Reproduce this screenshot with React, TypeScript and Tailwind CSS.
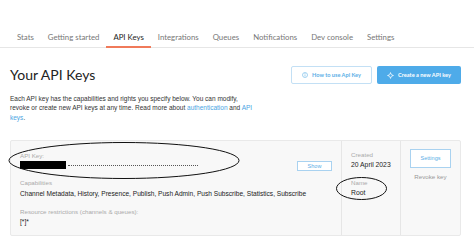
import React from "react";

const tabs = ["Stats", "Getting started", "API Keys", "Integrations", "Queues", "Notifications", "Dev console", "Settings"];

export default function App() {
  return (
    <div className="w-[474px] h-[240px] bg-white overflow-hidden relative" style={{ fontFamily: "Lato, 'Liberation Sans', sans-serif" }}>
      {/* Tabs */}
      <div className="pt-[31px] border-b border-[#e6e6e6]">
        <div className="flex px-[10px]">
          {tabs.map((t) => (
            <div
              key={t}
              className={
                t === "API Keys"
                  ? "px-[7px] pb-[3px] text-[7.8px] leading-[12px] text-[#222] border-b-2 border-[#f07a5a] -mb-px"
                  : "px-[7px] pb-[3px] text-[7.8px] leading-[12px] text-[#777] border-b-2 border-transparent -mb-px"
              }
            >
              {t}
            </div>
          ))}
        </div>
      </div>

      {/* Header */}
      <div className="flex items-center justify-between pl-[10px] pr-[13px] mt-[18px]">
        <div className="text-[14px] leading-[18px] text-[#222]">Your API Keys</div>
        <div className="flex gap-[5px]">
          <div className="flex items-center gap-[4px] h-[18px] w-[81px] justify-center border border-[#c3e0f5] rounded-[2px] text-[5.6px] text-[#5aaee6] font-bold">
            <svg width="6" height="6" viewBox="0 0 12 12" fill="none" stroke="#7cbfea" strokeWidth="1.4">
              <circle cx="6" cy="6" r="5" />
              <line x1="6" y1="5" x2="6" y2="9" />
              <circle cx="6" cy="3.3" r="0.4" fill="#7cbfea" />
            </svg>
            How to use Api Key
          </div>
          <div className="flex items-center gap-[4px] h-[18px] w-[84px] justify-center bg-[#4eabe9] rounded-[2px] text-[5.6px] text-white font-bold">
            <svg width="7" height="7" viewBox="0 0 12 12" fill="none" stroke="#ffffff" strokeWidth="1.3">
              <circle cx="6" cy="6" r="3" />
              <line x1="6" y1="0.5" x2="6" y2="3" />
              <line x1="6" y1="9" x2="6" y2="11.5" />
              <line x1="0.5" y1="6" x2="3" y2="6" />
              <line x1="9" y1="6" x2="11.5" y2="6" />
            </svg>
            Create a new API key
          </div>
        </div>
      </div>

      {/* Paragraph */}
      <div className="pl-[10px] mt-[10px] text-[6.5px] leading-[9.3px] text-[#333]" style={{ fontFamily: "'Liberation Sans', Arial, sans-serif" }}>
        Each API key has the capabilities and rights you specify below. You can modify,
        <br />
        revoke or create new API keys at any time. Read more about <span className="text-[#4aa5e3]">authentication</span> and{" "}
        <span className="text-[#4aa5e3]">API</span>
        <br />
        <span className="text-[#4aa5e3]">keys</span>.
      </div>

      {/* Card */}
      <div className="absolute left-[10px] top-[140px] w-[451px] h-[96px] bg-[#f8f8f8] border border-[#e9e9e9] rounded-[2px] flex" style={{ fontFamily: "'Liberation Sans', Arial, sans-serif" }}>
        <div className="w-[330px] pl-[9px] pr-[9px] pt-[11px] flex flex-col">
          <div className="text-[6.2px] leading-[8px] text-[#aaa]">API Key:</div>
          <div className="flex items-start justify-between">
            <div className="flex items-center gap-[2px] mt-[1px]">
              <div className="w-[46px] h-[8px] bg-black" />
              <div className="w-[130px] border-t-[1.5px] border-dotted border-[#555]" />
            </div>
            <div className="mt-[1px] w-[35px] h-[10px] border border-[#a9d2f0] bg-white text-[5.5px] text-[#5aaee6] flex items-center justify-center">
              Show
            </div>
          </div>
          <div className="mt-[8px] text-[6.2px] leading-[8px] text-[#aaa]">Capabilities</div>
          <div className="mt-[2px] text-[6.6px] leading-[9px] text-[#222]">
            Channel Metadata, History, Presence, Publish, Push Admin, Push Subscribe, Statistics, Subscribe
          </div>
          <div className="mt-[10px] text-[6.2px] leading-[8px] text-[#aaa]">Resource restrictions (channels &amp; queues):</div>
          <div className="mt-[1px] text-[6.6px] leading-[9px] text-[#222]">[*]*</div>
        </div>
        <div className="w-[59px] border-l border-[#e6e6e6] pl-[9px] pt-[10px] flex flex-col">
          <div className="text-[6.2px] leading-[8px] text-[#aaa]">Created</div>
          <div className="mt-[1px] text-[6.8px] leading-[9px] text-[#222]">20 April 2023</div>
          <div className="mt-[10px] text-[6.2px] leading-[8px] text-[#aaa]">Name</div>
          <div className="mt-[1px] text-[6.8px] leading-[9px] text-[#222]">Root</div>
        </div>
        <div className="flex-1 border-l border-[#e6e6e6] pt-[8px] flex flex-col items-center">
          <div className="w-[41px] h-[19px] border border-[#a9d2f0] bg-white text-[5.5px] text-[#5aaee6] flex items-center justify-center">
            Settings
          </div>
          <div className="mt-[5px] text-[6.2px] leading-[8px] text-[#999]">Revoke key</div>
        </div>
      </div>

      {/* Annotation ellipses */}
      <svg className="absolute left-0 top-0 pointer-events-none" width="474" height="240" viewBox="0 0 474 240">
        <ellipse cx="124" cy="160.5" rx="115" ry="18" fill="none" stroke="#111" strokeWidth="1" />
        <ellipse cx="361.5" cy="188.5" rx="25" ry="11" fill="none" stroke="#111" strokeWidth="1" />
      </svg>
    </div>
  );
}
